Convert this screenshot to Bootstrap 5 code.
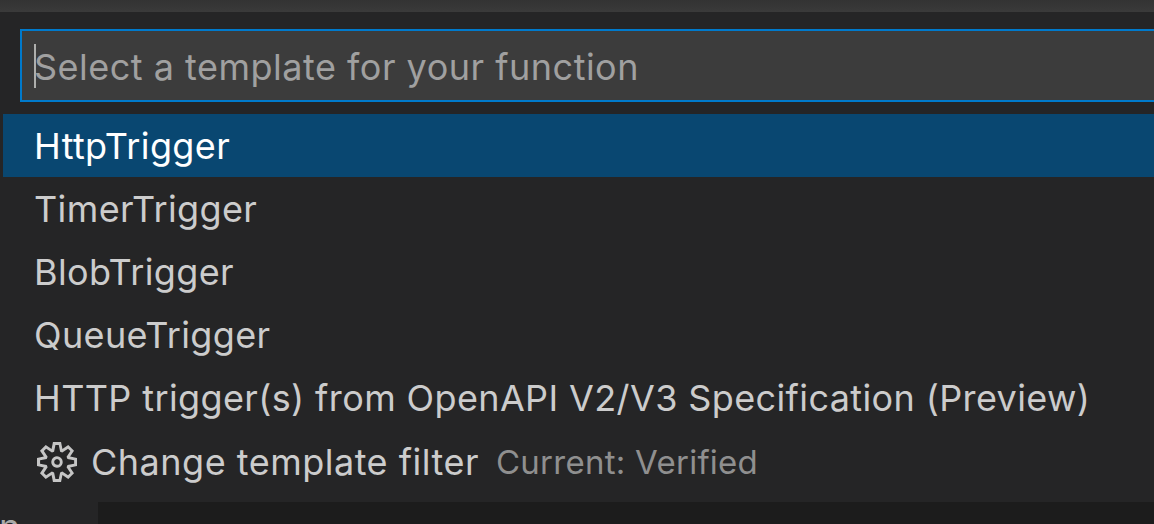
<!DOCTYPE html>
<html lang="en">
<head>
<meta charset="utf-8">
<title>Select a template</title>
<link rel="stylesheet" href="https://cdn.jsdelivr.net/npm/bootstrap@5.3.0/dist/css/bootstrap.min.css">
<style>
html,body{height:524px;overflow:hidden}
body{background:#1c1c1c;font-family:Inter,"Noto Sans",sans-serif;color:#ccc;font-size:36px;letter-spacing:.38px;position:relative}
.topstrip{height:12px;background:linear-gradient(#333,#3a3a3a)}
.picker{height:490px;background:#252526;padding:17px 0 0 3px}
.inputbox{height:73px;margin-left:17px;margin-right:-4px;background:#3c3c3c;border:2px solid #007acc;padding-left:12px}
.caret-line{width:2px;height:44px;background:#aeafad;flex:none}
.ph{color:#a0a0a0;line-height:1;margin-left:-2px;letter-spacing:.5px;position:relative;top:1px}
.rows{margin-top:12px}
.rowitem{height:63.2px;padding-left:31px;white-space:nowrap;line-height:1}
.rowitem.sel{background:#094771;color:#fff}
.gear{width:40px;height:40px;fill:#c5c5c5;flex:none;margin-left:3px}
.desc{color:#8f8f8f;font-size:33px;letter-spacing:.26px;margin-left:17px;position:relative;top:1px}
.gearlabel{margin-left:14px;letter-spacing:.5px}
.sidepiece{position:absolute;left:0;top:502px;width:98px;height:22px;background:#252526;overflow:hidden;color:#aaa}
.sidepiece span{position:absolute;left:-1px;top:7px;line-height:1}
</style>
</head>
<body>
<div class="topstrip"></div>
<div class="picker">
  <div class="inputbox d-flex align-items-center">
    <div class="caret-line"></div>
    <div class="ph">Select a template for your function</div>
  </div>
  <div class="rows">
    <div class="rowitem sel d-flex align-items-center">HttpTrigger</div>
    <div class="rowitem d-flex align-items-center">TimerTrigger</div>
    <div class="rowitem d-flex align-items-center">BlobTrigger</div>
    <div class="rowitem d-flex align-items-center">QueueTrigger</div>
    <div class="rowitem d-flex align-items-center">HTTP trigger(s) from OpenAPI V2/V3 Specification (Preview)</div>
    <div class="rowitem d-flex align-items-center">
      <svg class="gear" viewBox="0 0 24 24" aria-hidden="true"><path fill-rule="evenodd" d="M19.85 8.75l4.15.83v4.84l-4.15.83 2.35 3.52-3.43 3.43-3.52-2.35-.83 4.15H9.58l-.83-4.15-3.52 2.35-3.43-3.43 2.35-3.52L0 14.42V9.58l4.15-.83L1.8 5.23 5.23 1.8l3.52 2.35L9.58 0h4.84l.83 4.15 3.52-2.35 3.43 3.43-2.35 3.52zm-1.57 5.07l4-.81v-2l-4-.81-.54-1.3 2.29-3.43-1.43-1.43-3.43 2.29-1.3-.54-.81-4h-2l-.81 4-1.3.54-3.43-2.29-1.43 1.43L6.38 8.9l-.54 1.3-4 .81v2l4 .81.54 1.3-2.29 3.43 1.43 1.43 3.43-2.29 1.3.54.81 4h2l.81-4 1.3-.54 3.43 2.29 1.43-1.43-2.29-3.43.54-1.3zm-8.186-4.672A3.43 3.43 0 0 1 12 8.57 3.44 3.44 0 0 1 15.43 12a3.43 3.43 0 1 1-5.336-2.852zm.956 4.274c.281.188.612.288.95.288A1.7 1.7 0 0 0 13.71 12a1.71 1.71 0 1 0-2.66 1.422z"/></svg>
      <span class="gearlabel">Change template filter</span><span class="desc">Current: Verified</span>
    </div>
  </div>
</div>
<div class="sidepiece"><span>n</span></div>
</body>
</html>
